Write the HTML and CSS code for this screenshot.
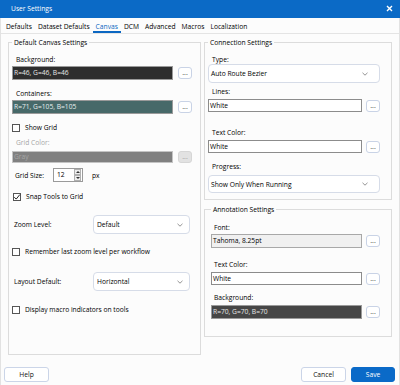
FILE: index.html
```html
<!DOCTYPE html>
<html lang="en">
<head>
  <meta charset="UTF-8" />
  <title>User Settings</title>
  <link rel="stylesheet" href="styles.css">
</head>
<body>
  <div class="window">
    <div class="titlebar">
      <span class="title">User Settings</span>
      <span class="close">
        <svg width="7" height="7" viewBox="0 0 7 7"><path d="M1 1L6 6M6 1L1 6" stroke="#fff" stroke-width="1.4"/></svg>
      </span>
    </div>

    <div class="tabs">
      <span class="tab">Defaults</span>
      <span class="tab">Dataset Defaults</span>
      <span class="tab active">Canvas</span>
      <span class="tab">DCM</span>
      <span class="tab">Advanced</span>
      <span class="tab">Macros</span>
      <span class="tab">Localization</span>
    </div>

    <div class="content">
      <fieldset class="group canvas">
        <legend>Default Canvas Settings</legend>

        <div class="label bg-label">Background:</div>
        <div class="color-row">
          <div class="input dark">R=46, G=46, B=46</div>
          <span class="dots">...</span>
        </div>

        <div class="label cont-label">Containers:</div>
        <div class="color-row cont-row">
          <div class="input teal">R=71, G=105, B=105</div>
          <span class="dots">...</span>
        </div>

        <div class="check-row grid-check">
          <span class="box"></span>
          <span>Show Grid</span>
        </div>

        <div class="label disabled gc-label">Grid Color:</div>
        <div class="color-row gc-row">
          <div class="input gray">Gray</div>
          <span class="dots off">...</span>
        </div>

        <div class="size-row">
          <span class="size-label">Grid Size:</span>
          <div class="spin">
            <span class="spin-val">12</span>
            <span class="spin-btns">
              <span class="spin-up"></span>
              <span class="spin-down"></span>
            </span>
          </div>
          <span class="px">px</span>
        </div>

        <div class="check-row snap-check">
          <span class="box checked">
            <svg width="8" height="8" viewBox="0 0 8 8"><path d="M1.3 4.2L3.2 6.1L6.8 1.6" fill="none" stroke="#222" stroke-width="1"/></svg>
          </span>
          <span>Snap Tools to Grid</span>
        </div>

        <div class="select-row zoom-row">
          <span class="row-label">Zoom Level:</span>
          <div class="select small">
            <span>Default</span>
            <svg class="chev" width="6" height="4" viewBox="0 0 6 4"><path d="M0.5 0.8L3 3.2L5.5 0.8" fill="none" stroke="#888" stroke-width="0.9"/></svg>
          </div>
        </div>

        <div class="check-row remember-check">
          <span class="box"></span>
          <span>Remember last zoom level per workflow</span>
        </div>

        <div class="select-row layout-row">
          <span class="row-label">Layout Default:</span>
          <div class="select small">
            <span>Horizontal</span>
            <svg class="chev" width="6" height="4" viewBox="0 0 6 4"><path d="M0.5 0.8L3 3.2L5.5 0.8" fill="none" stroke="#888" stroke-width="0.9"/></svg>
          </div>
        </div>

        <div class="check-row macro-check">
          <span class="box"></span>
          <span>Display macro indicators on tools</span>
        </div>
      </fieldset>

      <div class="right-col">
        <fieldset class="group conn">
          <legend>Connection Settings</legend>

          <div class="label type-label">Type:</div>
          <div class="select wide">
            <span>Auto Route Bezier</span>
            <svg class="chev" width="6" height="4" viewBox="0 0 6 4"><path d="M0.5 0.8L3 3.2L5.5 0.8" fill="none" stroke="#888" stroke-width="0.9"/></svg>
          </div>

          <div class="label lines-label">Lines:</div>
          <div class="color-row r-row">
            <div class="input white">White</div>
            <span class="dots">...</span>
          </div>

          <div class="label tc-label">Text Color:</div>
          <div class="color-row r-row tc-row">
            <div class="input white">White</div>
            <span class="dots">...</span>
          </div>

          <div class="label prog-label">Progress:</div>
          <div class="select wide prog">
            <span>Show Only When Running</span>
            <svg class="chev" width="6" height="4" viewBox="0 0 6 4"><path d="M0.5 0.8L3 3.2L5.5 0.8" fill="none" stroke="#888" stroke-width="0.9"/></svg>
          </div>
        </fieldset>

        <fieldset class="group anno">
          <legend>Annotation Settings</legend>

          <div class="label font-label">Font:</div>
          <div class="color-row a-row">
            <div class="input font">Tahoma, 8.25pt</div>
            <span class="dots">...</span>
          </div>

          <div class="label atc-label">Text Color:</div>
          <div class="color-row a-row atc-row">
            <div class="input white">White</div>
            <span class="dots">...</span>
          </div>

          <div class="label abg-label">Background:</div>
          <div class="color-row a-row abg-row">
            <div class="input darkgray">R=70, G=70, B=70</div>
            <span class="dots">...</span>
          </div>
        </fieldset>
      </div>
    </div>

    <div class="footer">
      <button class="btn help">Help</button>
      <span class="spacer"></span>
      <button class="btn cancel">Cancel</button>
      <button class="btn save">Save</button>
    </div>
  </div>
</body>
</html>
```

FILE: styles.css
```css
* {
  margin: 0;
  padding: 0;
  box-sizing: border-box;
}
body {
  width: 400px;
  height: 385px;
  background: #fff;
  font-family: "Open Sans", "Noto Sans", sans-serif;
  font-size: 6.7px;
  line-height: 9px;
  color: #000;
}
.window {
  width: 400px;
  height: 385px;
  background: #fcfcfc;
  border-right: 1px solid #e2e2e2;
  border-left: 1px solid #e2e2e2;
  display: flex;
  flex-direction: column;
}

/* title bar */
.titlebar {
  height: 18px;
  background: #0b6ac6;
  color: #fff;
  display: flex;
  align-items: center;
  padding-left: 11px;
  margin: 0 -1px;
}
.title {
  flex: 1;
  padding-bottom: 1px;
}
.close {
  width: 14px;
  height: 14px;
  display: flex;
  align-items: center;
  justify-content: center;
  margin-right: 4px;
  margin-top: -2px;
}

/* tabs */
.tabs {
  height: 16px;
  display: flex;
  padding-left: 2px;
  border-bottom: 1px solid #e4e4e4;
}
.tab {
  padding: 4px 3px 0 3px;
  height: 15px;
  border-bottom: 2px solid transparent;
}
.tab.active {
  color: #0b67c2;
  border-bottom-color: #0b67c2;
}

/* groups */
.content {
  display: flex;
  gap: 3px;
  padding: 4px 0 0 7px;
}
.group {
  border: 1px solid #dcdcdc;
  padding: 0 3px;
  min-width: 0;
}
.group legend {
  padding: 0 2px;
  margin-left: 0;
  line-height: 9px;
}
.canvas {
  width: 193px;
  height: 317px;
}
.right-col {
  width: 188px;
  display: flex;
  flex-direction: column;
}
.conn {
  height: 162px;
}
.anno {
  height: 132px;
  margin-top: 5px;
  padding-left: 6px;
}

.label {
  margin-left: 4px;
  height: 9px;
}
.label.disabled {
  color: #a6a6a6;
}
.anno .label {
  margin-left: 3px;
}

/* colour boxes */
.color-row {
  display: flex;
  align-items: center;
  gap: 5px;
  height: 14px;
}
.input {
  width: 161px;
  height: 14px;
  border: 1px solid #9a9a9a;
  padding-left: 1px;
  line-height: 12px;
  white-space: nowrap;
}
.input.dark {
  background: #2e2e2e;
  color: #e6e6e6;
}
.input.teal {
  background: #476969;
  color: #e6eeee;
}
.input.gray {
  background: #808080;
  color: #a6a6a6;
  border-color: #c4c4c4;
  height: 12px;
  line-height: 10px;
}
.input.white {
  background: #fff;
  border-color: #8c8c8c;
  height: 13px;
  line-height: 11px;
}
.input.font {
  background: #f0f0f0;
  border-color: #a8a8a8;
}
.input.darkgray {
  background: #464646;
  color: #e6e6e6;
}
.r-row .input {
  width: 154px;
}
.r-row {
  gap: 4px;
}
.a-row .input {
  width: 151px;
}
.a-row {
  gap: 4px;
}
.dots {
  width: 14px;
  height: 12px;
  border: 1px solid #c9d3e6;
  border-radius: 3px;
  background: #fff;
  font-size: 7px;
  line-height: 9px;
  text-align: center;
  color: #333;
}
.dots.off {
  background: #e2e2e2;
  border-color: #d6d6d6;
  color: #999;
}

/* checkboxes */
.check-row {
  display: flex;
  align-items: center;
  gap: 5px;
  height: 9px;
}
.box {
  width: 8px;
  height: 8px;
  border: 1px solid #555;
  background: #fff;
  display: flex;
}
.box svg {
  margin: -1px;
}
.snap-check {
  padding-left: 1px;
}

/* grid size */
.size-row {
  display: flex;
  align-items: center;
  height: 14px;
  padding-left: 3px;
}
.size-label {
  width: 38px;
}
.spin {
  width: 30px;
  height: 14px;
  border: 1px solid #9a9a9a;
  background: #fff;
  display: flex;
  justify-content: space-between;
  padding: 0 1px 0 3px;
  line-height: 12px;
}
.spin-btns {
  display: flex;
  flex-direction: column;
  justify-content: center;
  gap: 0;
}
.spin-up,
.spin-down {
  width: 7px;
  height: 6px;
  border: 1px solid #b0b0b0;
  background: #ededed;
  position: relative;
}
.spin-up::after,
.spin-down::after {
  content: "";
  position: absolute;
  left: 1px;
  border-left: 2px solid transparent;
  border-right: 2px solid transparent;
}
.spin-up::after {
  top: 1px;
  border-bottom: 2px solid #333;
}
.spin-down::after {
  top: 1px;
  border-top: 2px solid #333;
}
.px {
  margin-left: 9px;
}

/* selects */
.select-row {
  display: flex;
  align-items: center;
  height: 19px;
  padding-left: 2px;
}
.row-label {
  width: 79px;
}
.select {
  height: 19px;
  border: 1px solid #d6dce8;
  border-radius: 4px;
  background: #fff;
  display: flex;
  align-items: center;
  justify-content: space-between;
  padding: 0 6px 0 3px;
}
.select.small {
  width: 97px;
}
.select.wide {
  width: 172px;
  padding-left: 2px;
  padding-right: 11px;
}

/* vertical spacing, left */
.bg-label { margin-top: 8px; }
.canvas .color-row { margin-top: 2px; }
.cont-label { margin-top: 9px; }
.cont-row { margin-top: 3px; }
.grid-check { margin-top: 9px; }
.gc-label { margin-top: 6px; }
.canvas .gc-row { margin-top: 4px; height: 12px; }
.size-row { margin-top: 5px; }
.snap-check { margin-top: 10px; }
.zoom-row { margin-top: 14px; }
.remember-check { margin-top: 13px; }
.layout-row { margin-top: 16px; }
.macro-check { margin-top: 14px; }

/* vertical spacing, right */
.type-label { margin-top: 8px; }
.lines-label { margin-top: 4px; }
.r-row { margin-top: 3px; height: 13px; }
.tc-label { margin-top: 16px; }
.tc-row { margin-top: 3px; }
.prog-label { margin-top: 9px; }
.prog { margin-top: 4px; height: 18px; }

.font-label { margin-top: 9px; }
.a-row { margin-top: 2px; }
.atc-label { margin-top: 12px; }
.atc-row { height: 13px; margin-top: 3px; }
.abg-label { margin-top: 8px; }
.abg-row { margin-top: 3px; }

/* footer */
.footer {
  display: flex;
  gap: 5px;
  padding: 0 4px 0 3px;
  margin-top: 12px;
}
.spacer {
  flex: 1;
}
.btn {
  height: 15px;
  width: 45px;
  font-family: inherit;
  font-size: 6.7px;
  border: 1px solid #cbd5e8;
  border-radius: 3px;
  background: #fff;
  color: #111;
}
.btn.save {
  width: 44px;
  background: #0a6ac8;
  border-color: #0a6ac8;
  color: #fff;
}
```
